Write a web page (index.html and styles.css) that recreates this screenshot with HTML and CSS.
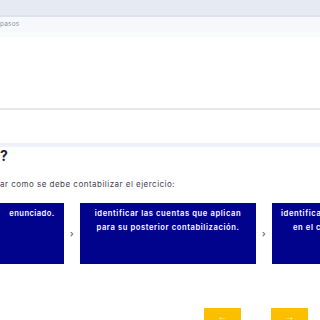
FILE: index.html
```html
<!DOCTYPE html>
<html lang="es">
<head>
    <meta charset="UTF-8">
    <meta name="viewport" content="width=device-width, initial-scale=1.0">
    <title>Ejercicio</title>
    <link rel="stylesheet" href="styles.css">
</head>
<body>

<div class="topbar"></div>
<div class="steps">pasos</div>
<div class="panel"></div>

<div class="band"></div>

<h2 class="question">?</h2>
<p class="intro">ar como se debe contabilizar el ejercicio:</p>

<div class="cards">
    <div class="card card-first">enunciado.</div>
    <span class="chevron">›</span>
    <div class="card card-wide">identificar las cuentas que aplican<br>para su posterior contabilización.</div>
    <span class="chevron">›</span>
    <div class="card card-last">identifica<br><span class="indent">en el c</span></div>
</div>

<div class="nav">
    <button class="nav-btn">&larr;</button>
    <button class="nav-btn">&rarr;</button>
</div>

</body>
</html>
```

FILE: styles.css
```css
body {
    font-family: Inter, "Noto Sans", sans-serif;
    background-color: #ffffff;
    margin: 0;
    padding: 0;
    overflow: hidden;
}
.topbar {
    height: 15px;
    background-color: #e6eaf3;
    border-bottom: 2px solid #dde2ec;
}
.steps {
    height: 15px;
    line-height: 15px;
    background-color: #f7f8fb;
    border-bottom: 5px solid #fafbfc;
    font-size: 6.5px;
    letter-spacing: 0.2px;
    color: #8a93a3;
}
.panel {
    height: 71px;
    border-bottom: 2px solid #e6e7eb;
}
.band {
    margin-top: 33px;
    height: 4px;
    background-color: #eef1f8;
}
.question {
    margin: 2px 0 0;
    font-size: 14px;
    line-height: 14px;
    font-weight: 700;
    color: #1d1d2b;
}
.intro {
    margin: 16px 0 0;
    font-size: 8px;
    letter-spacing: 0.48px;
    color: #3f4350;
}
.cards {
    display: flex;
    align-items: flex-start;
    gap: 6px;
    margin-top: 14px;
    white-space: nowrap;
}
.card {
    flex: none;
    box-sizing: border-box;
    height: 61px;
    padding-top: 4px;
    background-color: #02038c;
    color: #ffffff;
    font-size: 7.6px;
    font-weight: 600;
    letter-spacing: 0.6px;
    line-height: 14px;
    text-align: center;
    overflow: hidden;
}
.card-first {
    width: 64px;
    letter-spacing: 0.45px;
}
.card-wide {
    width: 176px;
}
.card-last {
    width: 48px;
    padding-left: 9px;
    text-align: left;
}
.indent {
    padding-left: 12px;
}
.chevron {
    width: 4px;
    font-size: 9px;
    line-height: 9px;
    color: #333333;
    margin-top: 26px;
}
.nav {
    display: flex;
    justify-content: flex-end;
    gap: 30px;
    margin-top: 44px;
    padding-right: 12px;
}
.nav-btn {
    width: 37px;
    height: 26px;
    padding: 0 0 10px;
    background-color: #fbbf00;
    color: white;
    border: none;
    font-size: 10px;
    font-weight: 700;
}
```
